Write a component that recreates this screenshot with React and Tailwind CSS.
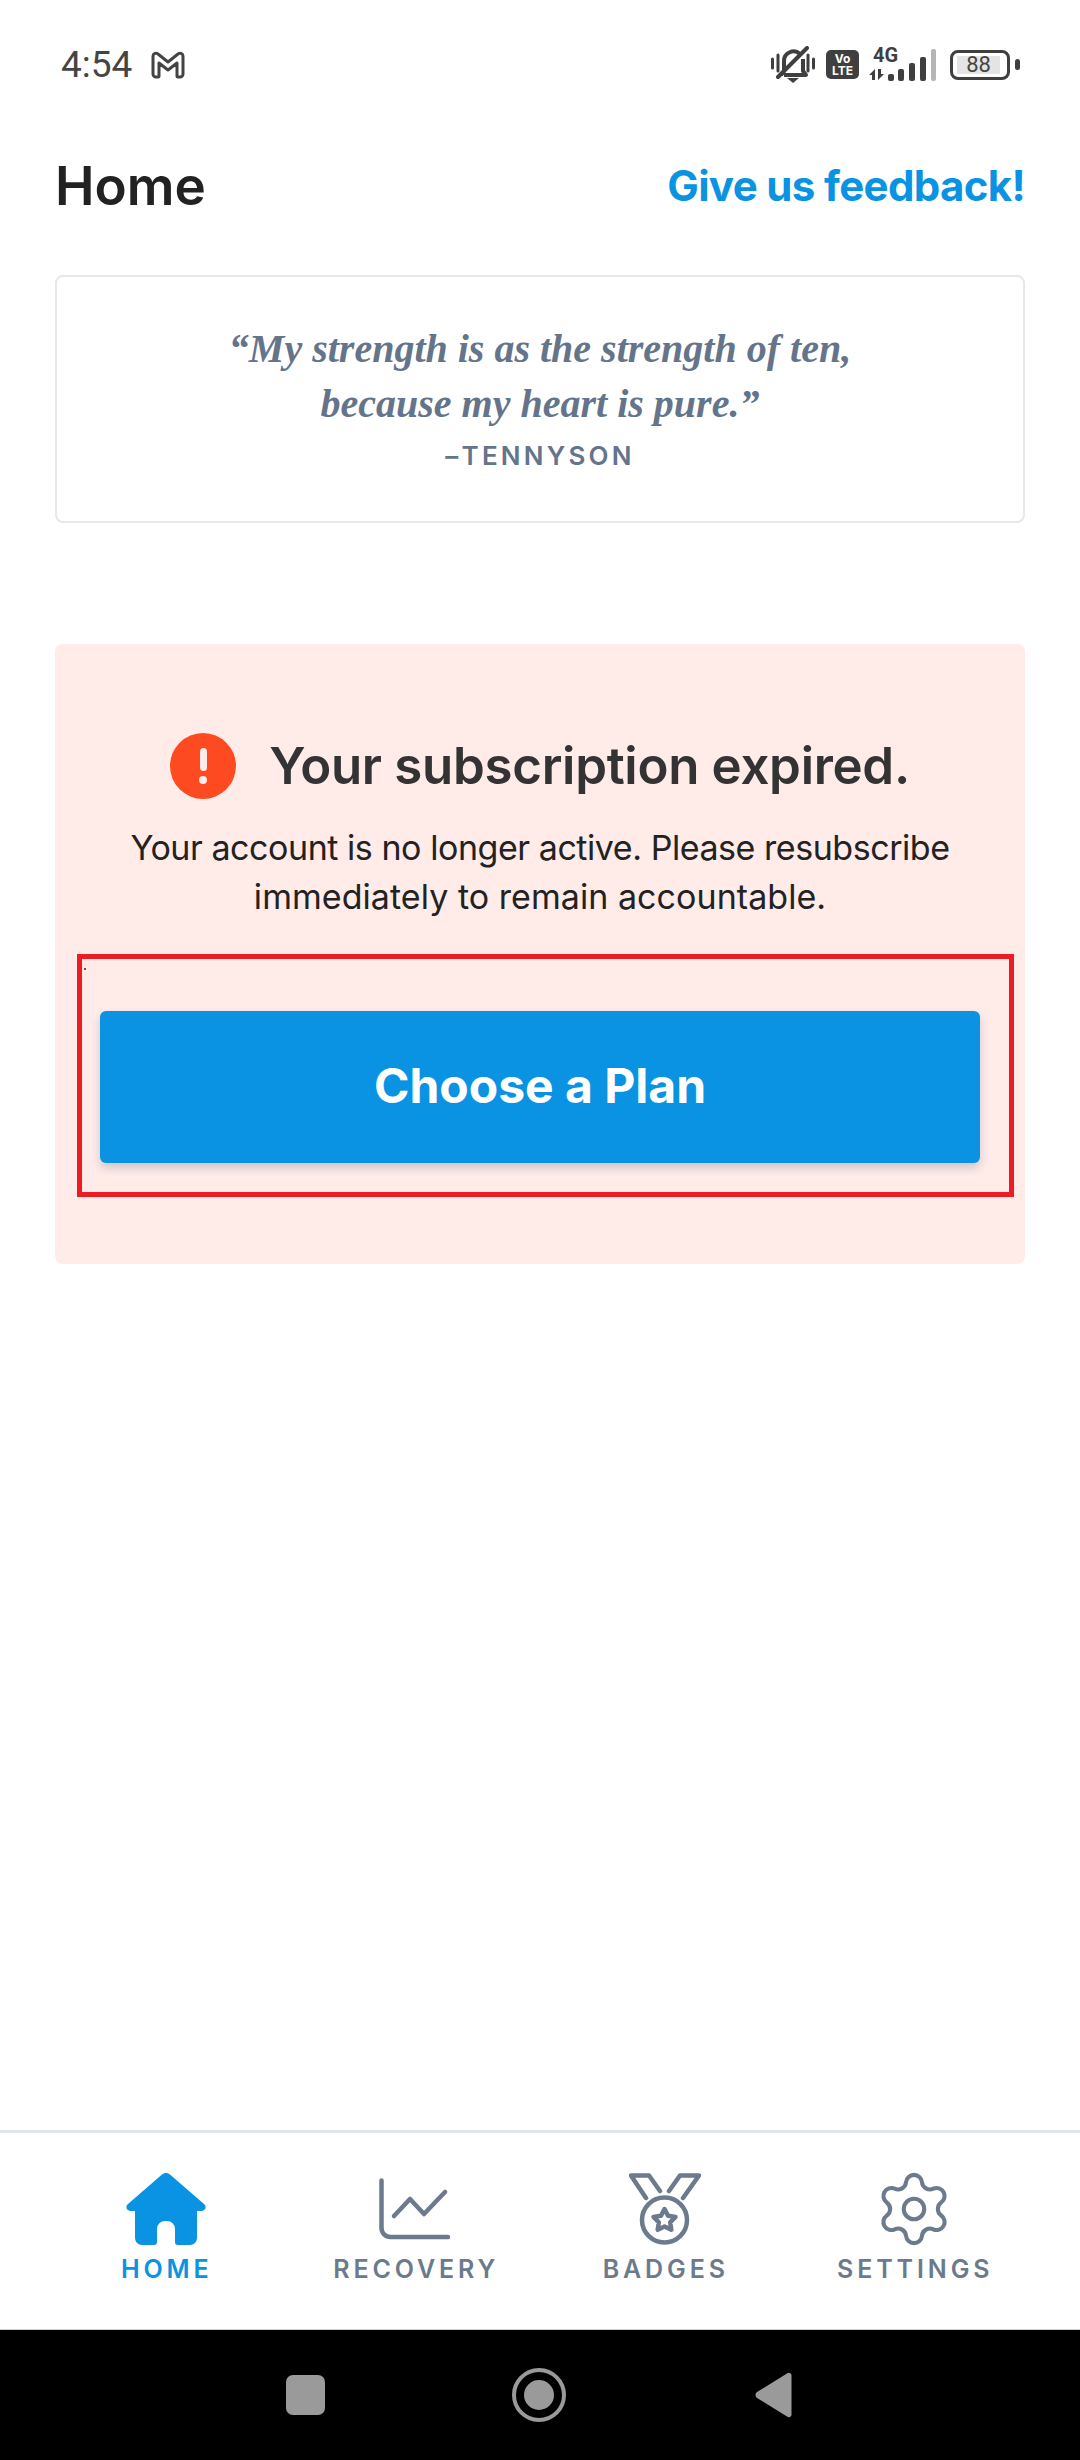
import { Settings } from 'lucide-react'

const sans = "font-['Inter',sans-serif]"

function BellOff() {
  return (
    <svg width="44" height="37" viewBox="0 0 44 37" fill="none" stroke="#3f3f3f">
      <path d="M1.500 13v9M42.500 13v9" strokeWidth="3" strokeLinecap="round" />
      <path d="M7 9v16M37 9v16" strokeWidth="3" strokeLinecap="round" />
      <path d="M10 29l3-4V15a9.500 9.500 0 0 1 16-7M32 13v12l3 4H13" strokeWidth="4" strokeLinejoin="round" />
      <path d="M7 31L36 2" strokeWidth="4" strokeLinecap="round" />
      <path d="M16 32h12l-6 5z" fill="#3f3f3f" stroke="none" />
    </svg>
  )
}

function Signal() {
  return (
    <div className="relative w-[68px] h-[32px]">
      <span className="absolute left-[4px] top-[-4px] text-[20px] leading-[20px] font-bold text-[#3f3f3f] font-['Roboto',sans-serif]">4G</span>
      <svg className="absolute inset-0" width="68" height="32" viewBox="0 0 68 32" fill="#3f3f3f">
        <path d="M6 20L0 26h3v5h3zM9 31l6-6h-3v-5H9z" />
        <rect x="19" y="25" width="6" height="7" rx="2" />
        <rect x="29" y="20" width="6" height="12" rx="2" />
        <rect x="40" y="14" width="6" height="18" rx="2" />
        <rect x="51" y="8" width="6" height="24" rx="2" />
        <rect x="62" y="0" width="5" height="32" rx="2" fill="#b5b5b5" />
      </svg>
    </div>
  )
}

function HomeIcon() {
  return (
    <svg width="80" height="72" viewBox="0 0 80 72" fill="#0a93e2">
      <path d="M36 1.500a6 6 0 0 1 8 0l34 29.500c3 2.800 1.500 7-2.500 7H71v27a7 7 0 0 1-7 7H52a3 3 0 0 1-3-3V56a8 8 0 0 0-8-8h-2a8 8 0 0 0-8 8v13a3 3 0 0 1-3 3H16a7 7 0 0 1-7-7V38H4.500c-4 0-5.500-4.200-2.500-7z" />
    </svg>
  )
}

function RecoveryIcon() {
  return (
    <svg width="72" height="62" viewBox="0 0 72 62" fill="none" stroke="#6b7a8c" strokeWidth="4.500" strokeLinecap="round" strokeLinejoin="round">
      <path d="M2.500 2.500V50a9 9 0 0 0 9 9H69" />
      <path d="M15 38L31 21l14 15 21-22" />
    </svg>
  )
}

function BadgeIcon() {
  return (
    <svg width="72" height="72" viewBox="0 0 72 72" fill="none" stroke="#6b7a8c" strokeWidth="4.500" strokeLinecap="round" strokeLinejoin="round">
      <path d="M17 25L2 2.500h18L31 18M54 25L70 2.500H51L40 18" />
      <circle cx="35.500" cy="47" r="22.500" />
      <path d="M35.500 36l3.500 6.700 7.500 1.200-5.300 5.400 1.100 7.500-6.800-3.400-6.800 3.400 1.100-7.500-5.300-5.400 7.500-1.200z" />
    </svg>
  )
}

function NavItem({ label, active, children }) {
  return (
    <div className="flex flex-col items-center">
      <div className="h-[76px] flex items-center justify-center">{children}</div>
      <span className={`mt-[7px] ml-[2px] text-[25px] leading-[30px] font-semibold tracking-[3.9px] ${active ? 'text-[#0a93e2]' : 'text-[#6b7a8c]'}`}>
        {label}
      </span>
    </div>
  )
}

export default function App() {
  return (
    <div className={`w-[1080px] h-[2460px] bg-white flex flex-col ${sans}`}>
      {/* status bar */}
      <div className="h-[128px] shrink-0 flex justify-between items-start pl-[61px] pr-[60px] pt-[46px]">
        <div className="flex items-center gap-[19px] text-[#444444]">
          <span className="text-[37px] leading-[38px] font-normal font-['Roboto',sans-serif]">4:54</span>
          <svg width="34" height="28" viewBox="0 0 34 28" fill="none" stroke="#444444" strokeWidth="3" strokeLinejoin="round">
            <path d="M2 5a3 3 0 0 1 5-2l10 8 10-8a3 3 0 0 1 5 2v18a3 3 0 0 1-3 3h-2a1 1 0 0 1-1-1V12l-9 7-9-7v13a1 1 0 0 1-1 1H5a3 3 0 0 1-3-3z" />
          </svg>
        </div>
        <div className="flex items-center h-[37px]">
          <BellOff />
          <div className="ml-[11px] w-[33px] h-[29px] rounded-[5px] bg-[#3f3f3f] flex flex-col items-center justify-center text-white text-[12px] leading-[12px] font-bold">
            <span>Vo</span>
            <span>LTE</span>
          </div>
          <div className="ml-[10px]"><Signal /></div>
          <div className="ml-[13px] w-[60px] h-[30px] rounded-[8px] border-[3px] border-[#3f3f3f] flex items-center pl-[4px]">
            <div className="w-[43px] h-[18px] bg-[#e4e4e4] text-[#444444] text-[22px] leading-[18px] text-center font-['Roboto',sans-serif]">88</div>
          </div>
          <div className="ml-[5px] w-[5px] h-[11px] rounded-full bg-[#3f3f3f]"></div>
        </div>
      </div>

      <main className="flex-1 px-[55px]">
        <div className="flex justify-between items-center h-[64px] mt-[26px]">
          <h1 className="text-[53px] leading-[64px] font-semibold text-[#222222]">Home</h1>
          <a className="text-[42px] leading-[64px] font-bold text-[#0a93e2] tracking-[-0.65px]">Give us feedback!</a>
        </div>

        <div className="mt-[57px] h-[248px] rounded-[8px] border-2 border-[#e6e8ea] flex flex-col items-center pt-[44px]">
          <p className="text-[40px] leading-[55px] font-bold italic text-[#64748b] text-center font-['Liberation_Serif',serif]">
            “My strength is as the strength of ten,<br />because my heart is pure.”
          </p>
          <p className="mt-[9px] text-[26px] leading-[32px] font-semibold tracking-[3.2px] text-[#64748b]">–TENNYSON</p>
        </div>

        <section className="mt-[121px] h-[620px] rounded-[8px] bg-[#ffebe8] px-[22px] pt-[89px]">
          <div className="flex items-center justify-center gap-[33px]">
            <div className="w-[66px] h-[66px] rounded-full bg-[#fd4a20] flex flex-col items-center justify-center gap-[5px]">
              <div className="w-[7px] h-[23px] rounded-full bg-[#ffebe8]"></div>
              <div className="w-[8px] h-[8px] rounded-full bg-[#ffebe8]"></div>
            </div>
            <h2 className="text-[51px] leading-[66px] font-semibold text-[#333333] tracking-[-0.3px]">Your subscription expired.</h2>
          </div>
          <p className="mt-[24px] text-[34px] leading-[49px] text-[#222222] text-center tracking-[-0.45px]">
            Your account is no longer active. Please resubscribe<br />
            <span className="tracking-[0.05px]">immediately to remain accountable.</span>
          </p>

          <div className="relative mt-[33px] mr-[-11px] h-[243px] border-[5px] border-[#ed1c24] pt-[52px] pl-[18px] pr-[29px]">
            <div className="absolute left-[2px] top-[9px] w-[2px] h-[2px] bg-[#ed1c24]"></div>
            <button className="w-full h-[152px] pb-[3px] rounded-[6px] bg-[#0a93e2] text-white text-[48px] font-bold shadow-[0_5px_8px_rgba(70,90,130,0.25)]">
              Choose a Plan
            </button>
          </div>
        </section>
      </main>

      {/* tab bar */}
      <nav className="h-[200px] shrink-0 border-t-[3px] border-[#dde5ee] border-b border-b-[#d0d0d0] grid grid-cols-4 px-[41px] pt-[38px]">
        <NavItem label="HOME" active><HomeIcon /></NavItem>
        <NavItem label="RECOVERY"><RecoveryIcon /></NavItem>
        <NavItem label="BADGES"><BadgeIcon /></NavItem>
        <NavItem label="SETTINGS"><Settings size={82} color="#6b7a8c" strokeWidth={1.2} /></NavItem>
      </nav>

      {/* android nav */}
      <div className="h-[130px] shrink-0 bg-black flex items-center pl-[286px]">
        <div className="w-[39px] h-[40px] rounded-[7px] bg-[#9a9a9a]"></div>
        <div className="ml-[187px] w-[54px] h-[54px] rounded-full border-[4px] border-[#9a9a9a] flex items-center justify-center">
          <div className="w-[30px] h-[30px] rounded-full bg-[#9a9a9a]"></div>
        </div>
        <svg className="ml-[189px]" width="37" height="46" viewBox="0 0 37 46" fill="#9a9a9a">
          <path d="M32 1.500c2-1.500 4.500-.5 4.500 2v39c0 2.500-2.500 3.500-4.500 2L2 26c-2-1.500-2-4.500 0-6z" />
        </svg>
      </div>
    </div>
  )
}
